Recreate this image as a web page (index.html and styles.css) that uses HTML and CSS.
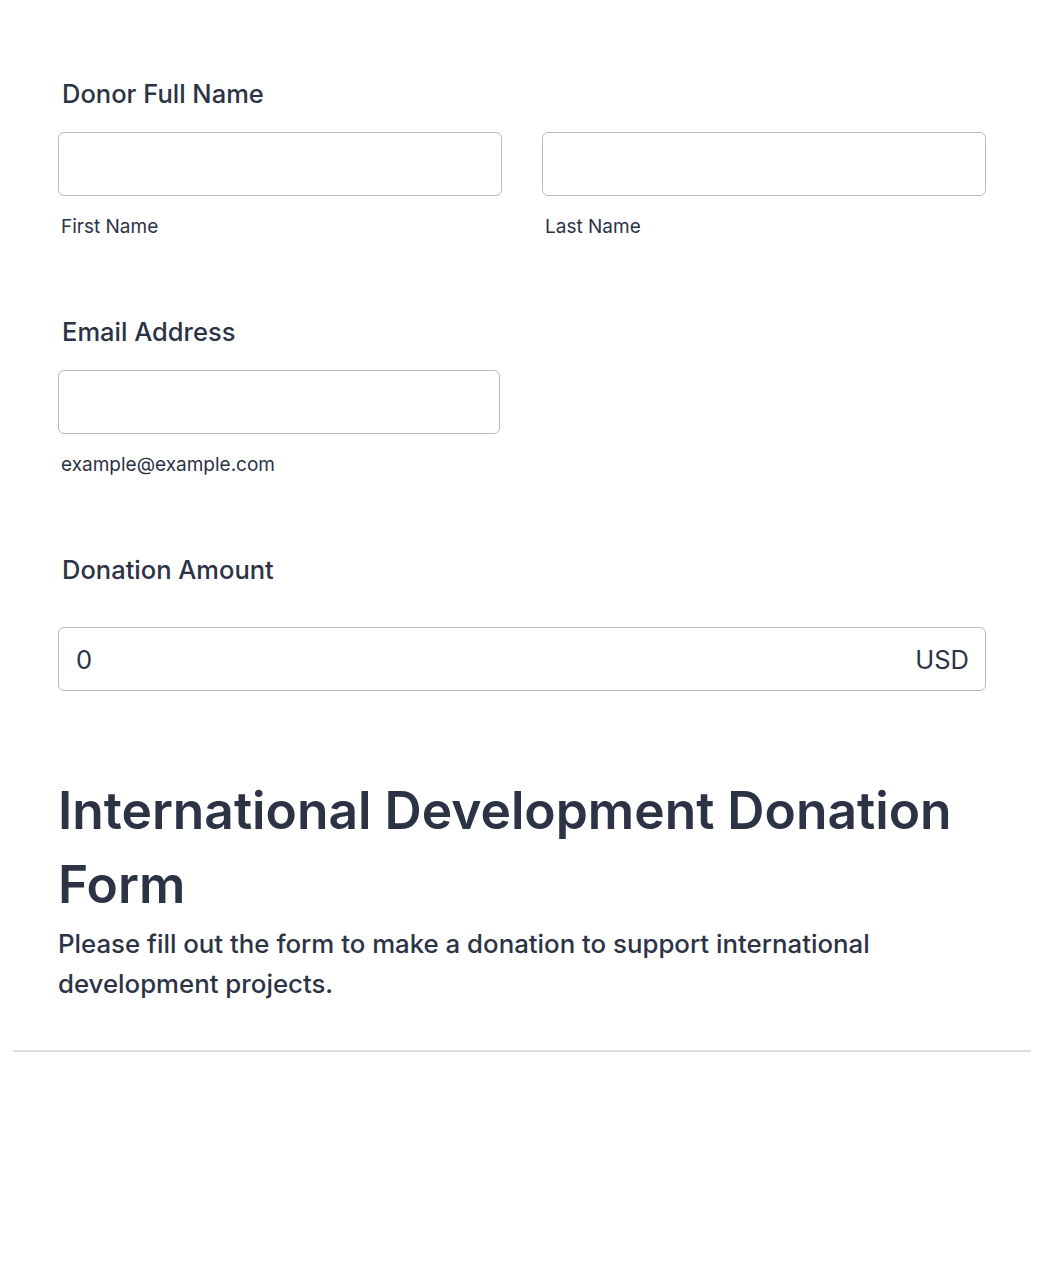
FILE: index.html
```html
<!DOCTYPE html>
<html lang="en">
<head>
<meta charset="utf-8">
<title>International Development Donation Form</title>
<link rel="stylesheet" href="styles.css">
</head>
<body>
<div class="page">
  <form class="form">
    <div class="field">
      <div class="label">Donor Full Name</div>
      <div class="row">
        <div class="col">
          <div class="input"></div>
          <div class="sublabel">First Name</div>
        </div>
        <div class="col">
          <div class="input"></div>
          <div class="sublabel">Last Name</div>
        </div>
      </div>
    </div>
    <div class="field">
      <div class="label">Email Address</div>
      <div class="col email">
        <div class="input"></div>
        <div class="sublabel">example@example.com</div>
      </div>
    </div>
    <div class="field">
      <div class="label label-wide">Donation Amount</div>
      <div class="input amount">
        <span class="value">0</span>
        <span class="currency">USD</span>
      </div>
    </div>
    <div class="header">
      <h1 class="title">International Development Donation Form</h1>
      <p class="desc">Please fill out the form to make a donation to support international development projects.</p>
    </div>
  </form>
  <div class="divider"></div>
</div>
</body>
</html>
```
FILE: styles.css
```css
* { box-sizing: border-box; }
html, body { margin: 0; padding: 0; background: #ffffff; }
body {
  font-family: Inter, "Noto Sans", "Liberation Sans", sans-serif;
  color: #2c3345;
}
.page {
  padding: 0 13px;
}
.form {
  padding: 79px 45px 0 45px;
  display: flex;
  flex-direction: column;
}
.field {
  display: flex;
  flex-direction: column;
  margin-bottom: 78px;
}
.label {
  font-size: 25.5px;
  line-height: 30px;
  font-weight: 500;
  padding-left: 4px;
  margin-bottom: 23px;
}
.label-wide {
  margin-bottom: 42px;
}
.row {
  display: flex;
  gap: 40px;
}
.col {
  flex: 1;
  display: flex;
  flex-direction: column;
}
.col.email {
  width: 442px;
  flex: none;
}
.input {
  height: 64px;
  border: 1px solid #b4b9c6;
  border-radius: 6px;
  background: #fff;
}
.sublabel {
  font-size: 19px;
  line-height: 24px;
  padding-left: 3px;
  margin-top: 19px;
}
.amount {
  display: flex;
  align-items: center;
  justify-content: space-between;
  padding: 0 16px 0 17px;
  font-size: 25.5px;
}
.header {
  margin-top: 4px;
}
.title {
  margin: 0;
  font-size: 51.5px;
  line-height: 74px;
  font-weight: 600;
}
.desc {
  margin: 3px 0 0 0;
  font-size: 25.8px;
  line-height: 40px;
  font-weight: 500;
}
.divider {
  margin-top: 46px;
  height: 2px;
  background: #dcdde3;
}
```
